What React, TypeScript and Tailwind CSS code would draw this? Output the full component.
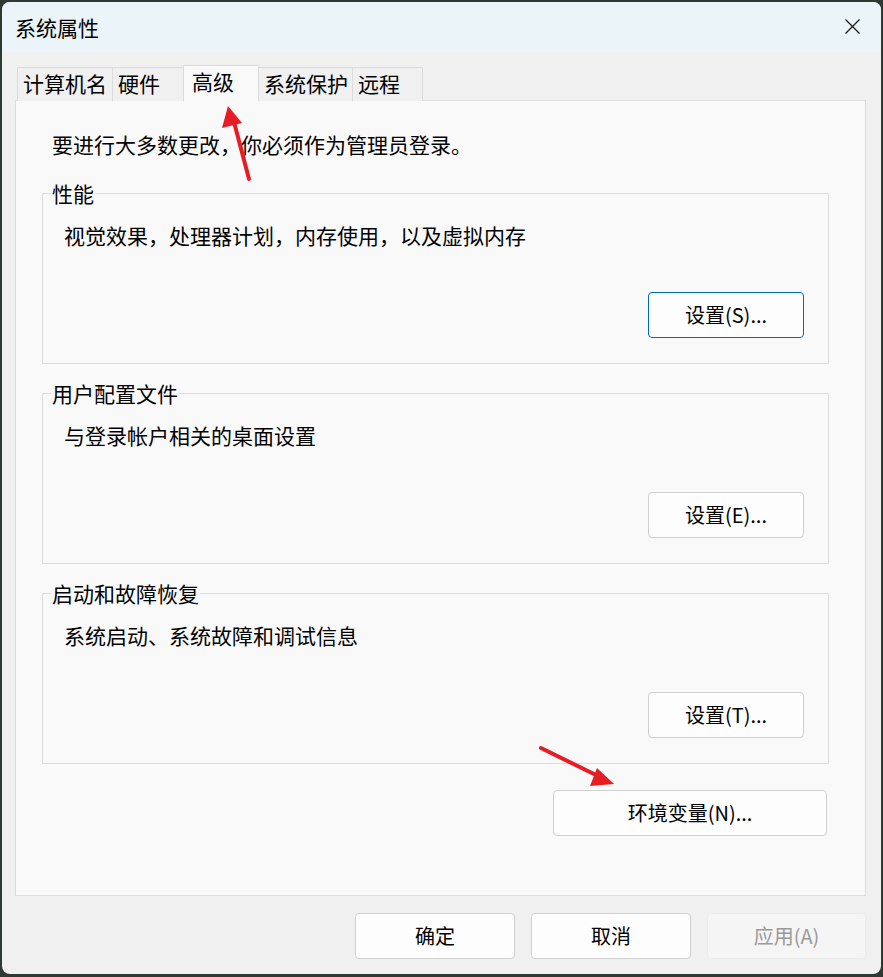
const font = { fontFamily: '"Noto Sans CJK SC", "Noto Sans", sans-serif' }

const tabs = [
  { label: '计算机名', w: 'w-[96px]' },
  { label: '硬件', w: 'w-[72px]' },
  { label: '高级', w: 'w-[76px]', active: true },
  { label: '系统保护', w: 'w-[95px]' },
  { label: '远程', w: 'w-[71px]' },
]

function Button({ label, focused, disabled, className = '' }: { label: string; focused?: boolean; disabled?: boolean; className?: string }) {
  const look = focused
    ? 'border-[#0067c0] bg-[#fdfdfd] text-black'
    : disabled
      ? 'border-[#ececec] bg-[#f5f5f5] text-[#9a9a9a]'
      : 'border-[#d0d0d0] bg-[#fdfdfd] text-black'
  return (
    <button
      type="button"
      className={`h-[46px] rounded-[4px] border text-[20px] leading-none flex items-center justify-center ${look} ${className}`}
    >
      {label}
    </button>
  )
}

function Group({ title, text, button }: { title: string; text: string; button: string }) {
  return (
    <fieldset className="h-[183px] border border-[#dcdcdc] flex flex-col">
      <legend className="ml-[8px] px-[1px] text-[21px] leading-[24px]">{title}</legend>
      <div className="mt-[16px] pl-[21px] text-[21px] leading-[28px]">{text}</div>
      <div className="mt-[43px] pr-[24px] flex justify-end">
        <Button label={button} focused={button.includes('(S)')} className="w-[156px]" />
      </div>
    </fieldset>
  )
}

export default function App() {
  return (
    <div className="relative w-[883px] h-[977px] bg-[#2f3833] overflow-hidden" style={font}>
      <div className="ml-[2px] mt-[2px] w-[879px] h-[972px] rounded-[8px] overflow-hidden bg-[#f0f0f0] flex flex-col text-black">
        {/* Title bar */}
        <div className="h-[50px] bg-[#eaf4f9] flex items-center justify-between pl-[13px] pr-[21px] shrink-0">
          <span className="text-[21px] leading-none">系统属性</span>
          <svg width="15" height="15" viewBox="0 0 15 15" className="mt-[-2px]">
            <path d="M0.5 0.5 L14.5 14.5 M14.5 0.5 L0.5 14.5" stroke="#1a1a1a" strokeWidth="1.3" />
          </svg>
        </div>

        <div className="flex flex-col px-[13px] pt-[14px] pr-[15px]">
          {/* Tabs */}
          <div className="flex items-end h-[35px] pl-[2px] relative z-10 -mb-[1px]">
            {tabs.map((t) =>
              t.active ? (
                <div
                  key={t.label}
                  className={`${t.w} h-[36px] bg-[#f9f9f9] border border-b-0 border-[#dcdcdc] -ml-[1px] pl-[8px] pt-[1px] text-[21px] leading-[28px]`}
                >
                  {t.label}
                </div>
              ) : (
                <div
                  key={t.label}
                  className={`${t.w} h-[34px] bg-[#f0f0f0] border border-b-0 border-[#dcdcdc] -ml-[1px] first:ml-0 pl-[5px] pt-[1px] text-[21px] leading-[28px]`}
                >
                  {t.label}
                </div>
              )
            )}
          </div>

          {/* Panel */}
          <div className="h-[796px] border border-[#dcdcdc] bg-[#f9f9f9] pl-[26px] pr-[36px] flex flex-col">
            <div className="mt-[29px] pl-[10px] text-[21px] leading-[28px]">要进行大多数更改，你必须作为管理员登录。</div>
            <div className="mt-[23px] flex flex-col gap-[17px]">
              <Group title="性能" text="视觉效果，处理器计划，内存使用，以及虚拟内存" button="设置(S)..." />
              <Group title="用户配置文件" text="与登录帐户相关的桌面设置" button="设置(E)..." />
              <Group title="启动和故障恢复" text="系统启动、系统故障和调试信息" button="设置(T)..." />
            </div>
            <div className="mt-[26px] flex justify-end pr-[2px]">
              <Button label="环境变量(N)..." className="w-[274px]" />
            </div>
          </div>

          {/* Bottom buttons */}
          <div className="mt-[17px] flex justify-end gap-[16px]">
            <Button label="确定" className="w-[160px]" />
            <Button label="取消" className="w-[160px]" />
            <Button label="应用(A)" disabled className="w-[159px]" />
          </div>
        </div>
      </div>

      {/* Annotation arrows */}
      <svg className="absolute inset-0 pointer-events-none" width="883" height="977" viewBox="0 0 883 977">
        <line x1="249" y1="179" x2="234" y2="122" stroke="#e81c24" strokeWidth="4" strokeLinecap="round" />
        <polygon points="228,106 222,128 242,123" fill="#e81c24" />
        <line x1="541" y1="748" x2="600" y2="777" stroke="#e81c24" strokeWidth="4" strokeLinecap="round" />
        <polygon points="614,784 597,768 590,786" fill="#e81c24" />
      </svg>
    </div>
  )
}
